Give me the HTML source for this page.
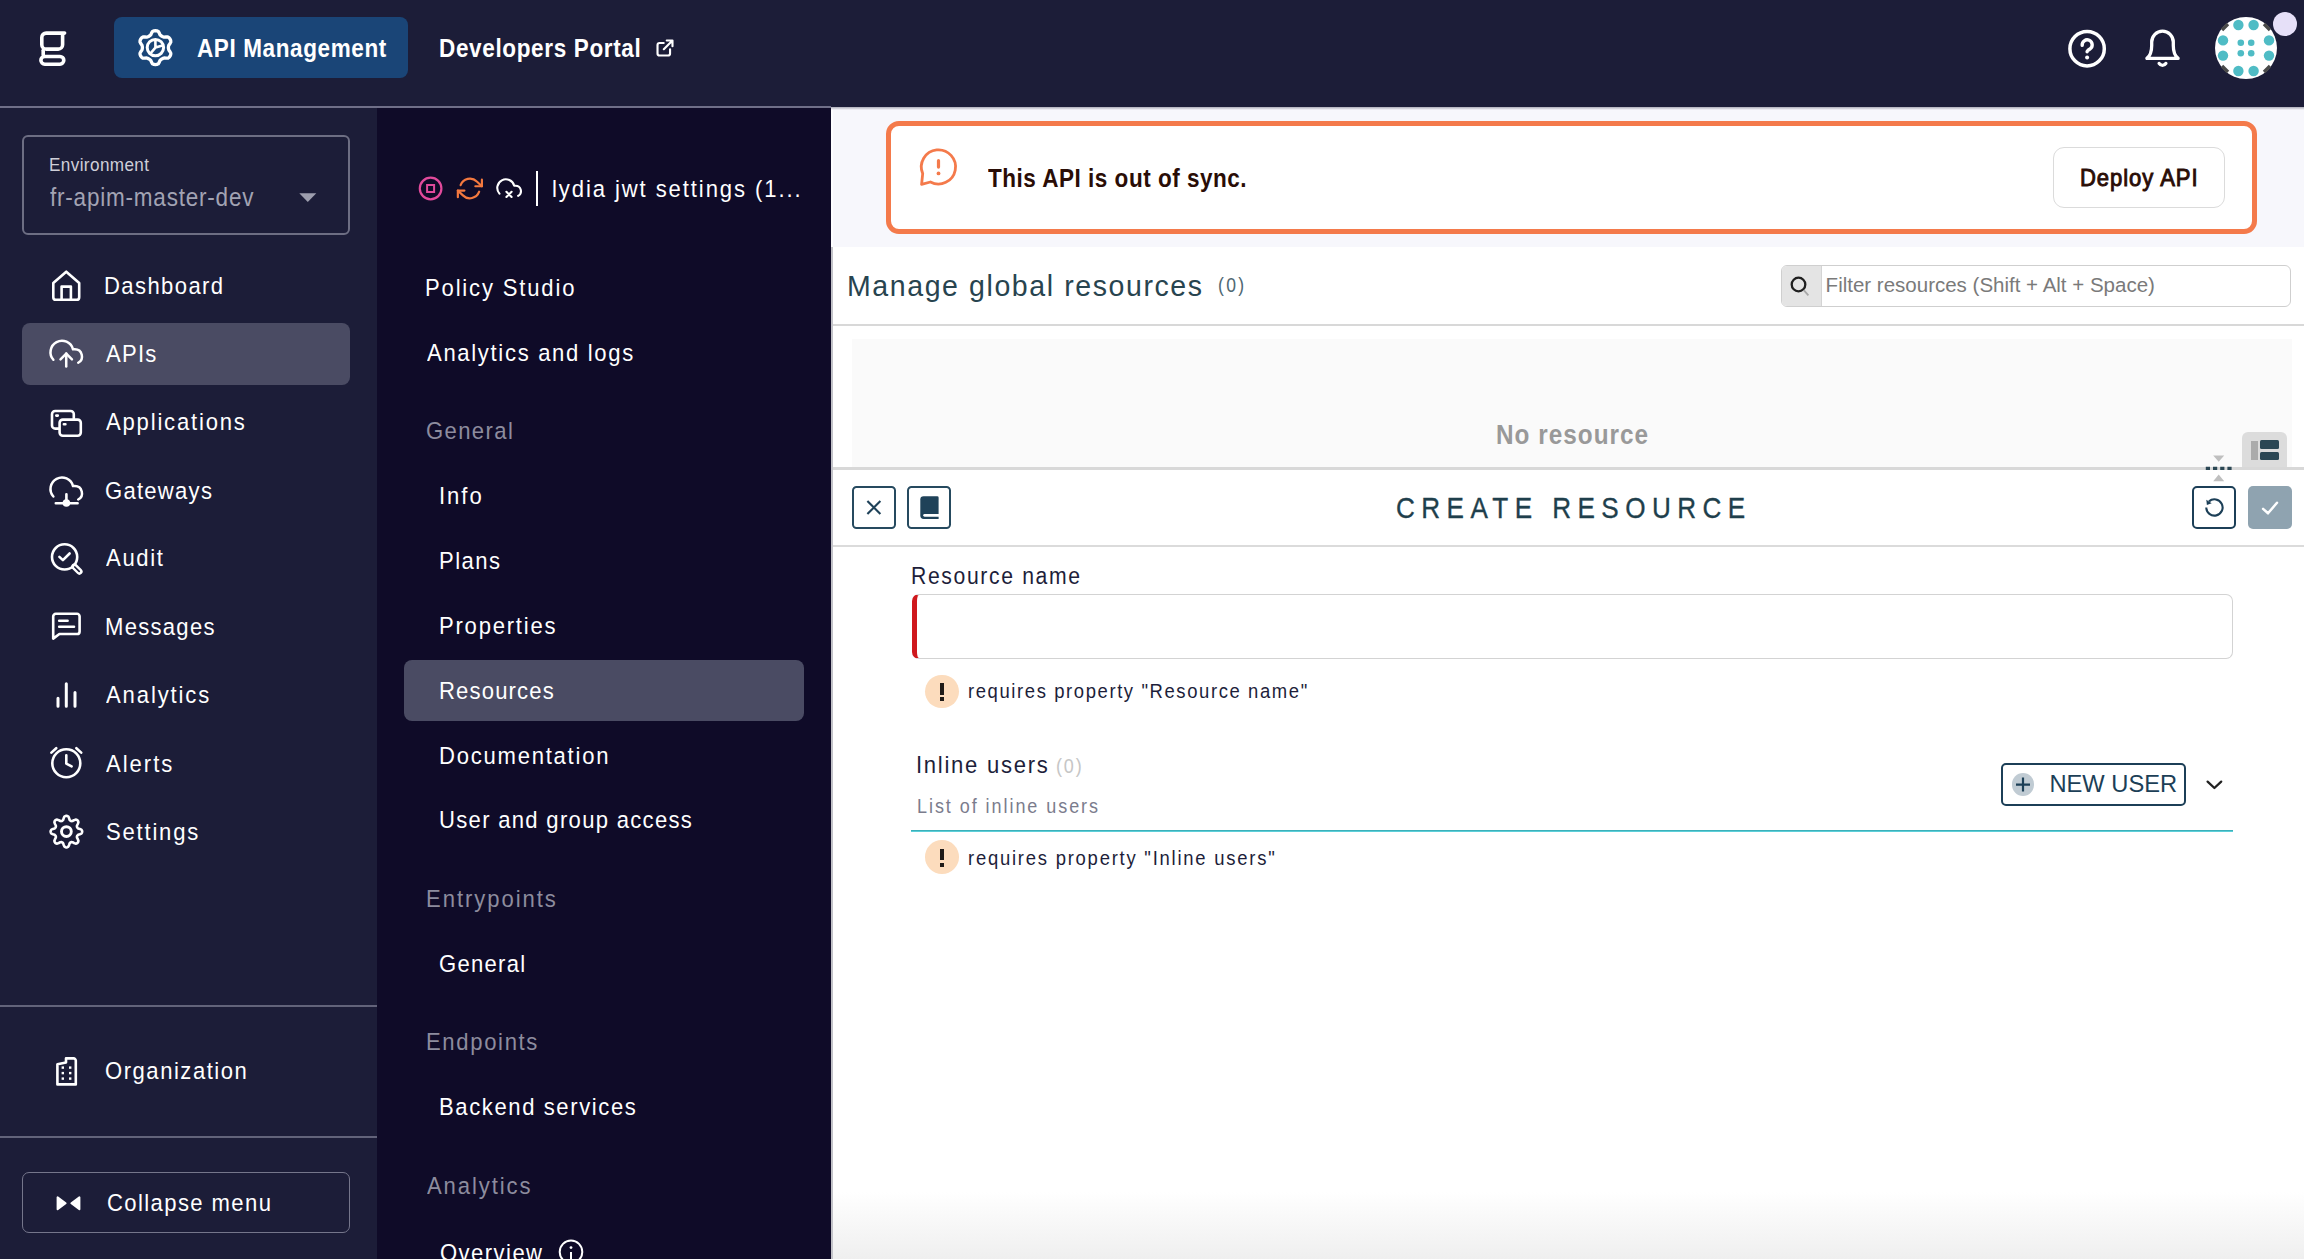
<!DOCTYPE html>
<html>
<head>
<meta charset="utf-8">
<title>API Management</title>
<style>
*{box-sizing:border-box;margin:0;padding:0}
html,body{width:2304px;height:1259px;overflow:hidden;background:#fff}
body{font-family:"Liberation Sans",sans-serif;position:relative;color:#fff}
.a{position:absolute}
.t{position:absolute;white-space:nowrap;line-height:1}
svg{position:absolute;left:0;top:0;overflow:visible}
.w{fill:none;stroke:#fff;stroke-width:2.6;stroke-linecap:round;stroke-linejoin:round}
</style>
</head>
<body>
<div class="a" style="left:0;top:0;width:2304px;height:107px;background:#1c1d38"></div>
<div class="a" style="left:0;top:107px;width:377px;height:1152px;background:#1c1d38"></div>
<div class="a" style="left:377px;top:107px;width:454px;height:1152px;background:#0f0b28"></div>
<div class="a" style="left:0;top:106px;width:831px;height:1.5px;background:#6f6f88"></div>
<div class="a" style="left:831px;top:107px;width:1473px;height:140px;background:#f7f7fc"></div>
<div class="a" style="left:831px;top:247px;width:1473px;height:1012px;background:linear-gradient(to bottom,#fff 0,#fff 945px,#efefef 1012px)"></div>
<div class="a" style="left:831px;top:247px;width:2px;height:1012px;background:#c3c3c9"></div>
<div class="a" style="left:831px;top:108px;width:2px;height:139px;background:#fdfdff"></div>
<div class="a" style="left:831px;top:107px;width:1473px;height:3px;background:linear-gradient(to bottom,rgba(30,31,58,.35),rgba(30,31,58,0))"></div>
<div class="a" style="left:114px;top:17px;width:294px;height:61px;border-radius:8px;background:#1a4577"></div>
<div class="t" style="left:196.69px;top:35.65px;font-size:25px;letter-spacing:0.688px;color:#fff;transform:scaleX(0.9000);transform-origin:0 0;font-weight:bold;">API Management</div>
<div class="t" style="left:438.79px;top:35.65px;font-size:25px;letter-spacing:0.724px;color:#fff;transform:scaleX(0.9000);transform-origin:0 0;font-weight:bold;">Developers Portal</div>
<div class="a" style="left:2273.2px;top:12px;width:24px;height:24px;border-radius:50%;background:#e6e0f8"></div>
<div class="a" style="left:22px;top:135px;width:327.5px;height:99.5px;border:2px solid #6d6e83;border-radius:6px"></div>
<div class="t" style="left:48.88px;top:155.15px;font-size:19px;letter-spacing:0.447px;color:#cfcfd8;transform:scaleX(0.9000);transform-origin:0 0;">Environment</div>
<div class="t" style="left:49.91px;top:185.15px;font-size:25px;letter-spacing:0.878px;color:#a2a3b3;transform:scaleX(0.9000);transform-origin:0 0;">fr-apim-master-dev</div>
<div class="a" style="left:22px;top:323.25px;width:327.5px;height:61.25px;border-radius:8px;background:#4a4b63"></div>
<div class="t" style="left:104.24px;top:274.15px;font-size:24.5px;letter-spacing:1.564px;color:#fff;transform:scaleX(0.9000);transform-origin:0 0;">Dashboard</div>
<div class="t" style="left:105.50px;top:342.15px;font-size:24.5px;letter-spacing:1.388px;color:#fff;transform:scaleX(0.9000);transform-origin:0 0;">APIs</div>
<div class="t" style="left:106.00px;top:410.15px;font-size:24.5px;letter-spacing:2.012px;color:#fff;transform:scaleX(0.9000);transform-origin:0 0;">Applications</div>
<div class="t" style="left:104.90px;top:478.65px;font-size:24.5px;letter-spacing:1.407px;color:#fff;transform:scaleX(0.9000);transform-origin:0 0;">Gateways</div>
<div class="t" style="left:106.00px;top:546.40px;font-size:24.5px;letter-spacing:1.860px;color:#fff;transform:scaleX(0.9000);transform-origin:0 0;">Audit</div>
<div class="t" style="left:104.74px;top:614.65px;font-size:24.5px;letter-spacing:1.427px;color:#fff;transform:scaleX(0.9000);transform-origin:0 0;">Messages</div>
<div class="t" style="left:106.00px;top:683.15px;font-size:24.5px;letter-spacing:2.093px;color:#fff;transform:scaleX(0.9000);transform-origin:0 0;">Analytics</div>
<div class="t" style="left:106.00px;top:751.65px;font-size:24.5px;letter-spacing:2.208px;color:#fff;transform:scaleX(0.9000);transform-origin:0 0;">Alerts</div>
<div class="t" style="left:105.51px;top:819.65px;font-size:24.5px;letter-spacing:1.993px;color:#fff;transform:scaleX(0.9000);transform-origin:0 0;">Settings</div>
<div class="t" style="left:105.31px;top:1059.45px;font-size:24.5px;letter-spacing:1.697px;color:#fff;transform:scaleX(0.9000);transform-origin:0 0;">Organization</div>
<div class="t" style="left:106.50px;top:1190.55px;font-size:24.5px;letter-spacing:1.561px;color:#fff;transform:scaleX(0.9000);transform-origin:0 0;">Collapse menu</div>
<div class="a" style="left:0;top:1005px;width:377px;height:1.5px;background:#62637a"></div>
<div class="a" style="left:0;top:1136px;width:377px;height:1.5px;background:#62637a"></div>
<div class="a" style="left:22.2px;top:1172.4px;width:327.5px;height:60.6px;border:1.6px solid #75768b;border-radius:7px"></div>
<div class="a" style="left:535.8px;top:171px;width:2.3px;height:34.5px;background:#fff"></div>
<div class="t" style="left:551.67px;top:176.55px;font-size:24.5px;letter-spacing:2.125px;color:#fff;transform:scaleX(0.9000);transform-origin:0 0;">lydia jwt settings (1...</div>
<div class="a" style="left:404.25px;top:660px;width:399.7px;height:61.3px;border-radius:8px;background:#4a4b63"></div>
<div class="t" style="left:425.24px;top:276.45px;font-size:24.5px;letter-spacing:2.037px;color:#fff;transform:scaleX(0.9000);transform-origin:0 0;">Policy Studio</div>
<div class="t" style="left:426.60px;top:341.35px;font-size:24.5px;letter-spacing:1.866px;color:#fff;transform:scaleX(0.9000);transform-origin:0 0;">Analytics and logs</div>
<div class="t" style="left:425.50px;top:419.25px;font-size:24.5px;letter-spacing:1.546px;color:#8d8c9e;transform:scaleX(0.9000);transform-origin:0 0;">General</div>
<div class="t" style="left:439.02px;top:484.15px;font-size:24.5px;letter-spacing:2.186px;color:#fff;transform:scaleX(0.9000);transform-origin:0 0;">Info</div>
<div class="t" style="left:439.24px;top:549.15px;font-size:24.5px;letter-spacing:1.642px;color:#fff;transform:scaleX(0.9000);transform-origin:0 0;">Plans</div>
<div class="t" style="left:439.24px;top:613.90px;font-size:24.5px;letter-spacing:1.974px;color:#fff;transform:scaleX(0.9000);transform-origin:0 0;">Properties</div>
<div class="t" style="left:439.24px;top:678.90px;font-size:24.5px;letter-spacing:1.304px;color:#fff;transform:scaleX(0.9000);transform-origin:0 0;">Resources</div>
<div class="t" style="left:439.14px;top:743.55px;font-size:24.5px;letter-spacing:1.955px;color:#fff;transform:scaleX(0.9000);transform-origin:0 0;">Documentation</div>
<div class="t" style="left:439.25px;top:808.45px;font-size:24.5px;letter-spacing:1.452px;color:#fff;transform:scaleX(0.9000);transform-origin:0 0;">User and group access</div>
<div class="t" style="left:425.64px;top:887.25px;font-size:24.5px;letter-spacing:2.175px;color:#8d8c9e;transform:scaleX(0.9000);transform-origin:0 0;">Entrypoints</div>
<div class="t" style="left:439.15px;top:951.65px;font-size:24.5px;letter-spacing:1.416px;color:#fff;transform:scaleX(0.9000);transform-origin:0 0;">General</div>
<div class="t" style="left:425.64px;top:1030.15px;font-size:24.5px;letter-spacing:1.849px;color:#8d8c9e;transform:scaleX(0.9000);transform-origin:0 0;">Endpoints</div>
<div class="t" style="left:439.14px;top:1095.45px;font-size:24.5px;letter-spacing:1.776px;color:#fff;transform:scaleX(0.9000);transform-origin:0 0;">Backend services</div>
<div class="t" style="left:427.00px;top:1173.75px;font-size:24.5px;letter-spacing:2.121px;color:#8d8c9e;transform:scaleX(0.9000);transform-origin:0 0;">Analytics</div>
<div class="t" style="left:439.51px;top:1241.25px;font-size:24.5px;letter-spacing:1.610px;color:#fff;transform:scaleX(0.9000);transform-origin:0 0;">Overview</div>
<div class="a" style="left:886.25px;top:121px;width:1371px;height:112.5px;border:5px solid #f47a4b;border-radius:13px;background:#fff"></div>
<div class="t" style="left:987.52px;top:165.65px;font-size:25px;letter-spacing:0.572px;color:#2a0d06;transform:scaleX(0.9000);transform-origin:0 0;font-weight:bold;">This API is out of sync.</div>
<div class="a" style="left:2053px;top:147.25px;width:171.75px;height:60.5px;border:1.5px solid #dbdbdb;border-radius:11px;background:#fff"></div>
<div class="t" style="left:2080.24px;top:165.85px;font-size:24.5px;letter-spacing:1.045px;color:#2a0d06;transform:scaleX(0.9000);transform-origin:0 0;-webkit-text-stroke:0.95px #2a0d06;">Deploy API</div>
<div class="t" style="left:847.47px;top:271.40px;font-size:30px;letter-spacing:1.673px;color:#28444f;transform:scaleX(0.9500);transform-origin:0 0;">Manage global resources</div>
<div class="t" style="left:1218.20px;top:275.95px;font-size:19.5px;letter-spacing:2.608px;color:#4f6873;transform:scaleX(0.9000);transform-origin:0 0;">(0)</div>
<div class="a" style="left:1780.5px;top:264.75px;width:510.75px;height:41.75px;border:1.5px solid #cfcfcf;border-radius:6px;background:#fff;overflow:hidden"><div class="a" style="left:0;top:0;width:40px;height:40px;background:#e4e4e4;border-right:1px solid #d4d4d4"></div></div>
<div class="t" style="left:1825.61px;top:275.25px;font-size:20.51px;letter-spacing:0.000px;color:#7a7a7a;">Filter resources (Shift + Alt + Space)</div>
<div class="a" style="left:833px;top:324px;width:1471px;height:2px;background:#d8d8d8"></div>
<div class="a" style="left:852px;top:339px;width:1440px;height:128px;background:#fafafa"></div>
<div class="t" style="left:1495.67px;top:421.65px;font-size:27px;letter-spacing:1.141px;color:#999;transform:scaleX(0.9000);transform-origin:0 0;font-weight:bold;">No resource</div>
<div class="a" style="left:2242px;top:432px;width:45px;height:36px;border-radius:6px 6px 0 0;background:#dcdcdc"></div>
<div class="a" style="left:2250.75px;top:440.5px;width:6.75px;height:19.75px;background:#ababab"></div>
<div class="a" style="left:2260.4px;top:440.25px;width:18.7px;height:8.5px;border-radius:1.5px;background:#2b4754"></div>
<div class="a" style="left:2260.4px;top:451.9px;width:18.7px;height:8.5px;border-radius:1.5px;background:#2b4754"></div>
<div class="a" style="left:833px;top:467px;width:1471px;height:3px;background:#d8d8d8"></div>
<div class="t" style="left:1395.94px;top:492.90px;font-size:30px;letter-spacing:7.394px;color:#1f3f4c;transform:scaleX(0.8700);transform-origin:0 0;-webkit-text-stroke:0.35px #1f3f4c;">CREATE RESOURCE</div>
<div class="a" style="left:852px;top:486.25px;width:43.75px;height:42.5px;border:2px solid #264a5f;border-radius:4.5px;background:#fff"></div>
<div class="a" style="left:907px;top:486.25px;width:44.25px;height:42.5px;border:2px solid #264a5f;border-radius:4.5px;background:#fff"></div>
<div class="a" style="left:2192.25px;top:486.25px;width:44px;height:42.5px;border:2px solid #1c3f57;border-radius:5px;background:#fff"></div>
<div class="a" style="left:2248px;top:486.25px;width:44px;height:42.5px;border-radius:5px;background:#8fa3b0"></div>
<div class="a" style="left:833px;top:545px;width:1471px;height:2px;background:#dbdbdb"></div>
<div class="t" style="left:911.31px;top:564.90px;font-size:23.5px;letter-spacing:1.826px;color:#1d1e3a;transform:scaleX(0.9000);transform-origin:0 0;">Resource name</div>
<div class="a" style="left:912px;top:593.75px;width:1320.5px;height:65.5px;border:1.5px solid #d3d3d3;border-left:5.6px solid #cf181d;border-radius:7px;background:#fff"></div>
<div class="a" style="left:925px;top:674.8px;width:33.7px;height:33.7px;border-radius:50%;background:#fcdcbd"></div>
<div class="a" style="left:940.1px;top:683.2px;width:3.9px;height:11.6px;background:#1f1a17"></div>
<div class="a" style="left:940.1px;top:697.2px;width:3.9px;height:4px;background:#1f1a17"></div>
<div class="a" style="left:925px;top:840.3px;width:33.7px;height:33.7px;border-radius:50%;background:#fcdcbd"></div>
<div class="a" style="left:940.1px;top:848.7px;width:3.9px;height:11.6px;background:#1f1a17"></div>
<div class="a" style="left:940.1px;top:862.7px;width:3.9px;height:4px;background:#1f1a17"></div>
<div class="t" style="left:968.05px;top:681.40px;font-size:20.5px;letter-spacing:1.780px;color:#1d1e3a;transform:scaleX(0.9000);transform-origin:0 0;">requires property &quot;Resource name&quot;</div>
<div class="t" style="left:916.02px;top:753.40px;font-size:24.5px;letter-spacing:1.916px;color:#1d1e3a;transform:scaleX(0.9000);transform-origin:0 0;">Inline users</div>
<div class="t" style="left:1055.67px;top:755.70px;font-size:20px;letter-spacing:2.056px;color:#c6c6c6;transform:scaleX(0.9000);transform-origin:0 0;">(0)</div>
<div class="t" style="left:916.56px;top:795.90px;font-size:20px;letter-spacing:2.163px;color:#7b7c8d;transform:scaleX(0.9000);transform-origin:0 0;">List of inline users</div>
<div class="a" style="left:2001px;top:763.1px;width:185.2px;height:42.6px;border:2px solid #1c3f57;border-radius:5px;background:#fff"></div>
<div class="a" style="left:2011.8px;top:773.4px;width:22.4px;height:22.4px;border-radius:50%;background:#c0cbd3"></div>
<div class="t" style="left:2049.40px;top:772.79px;font-size:23.71px;letter-spacing:0.000px;color:#1c3f57;">NEW USER</div>
<div class="a" style="left:910.5px;top:830px;width:1322.4px;height:2px;background:linear-gradient(to bottom,#3bb0b9 50%,#5ccfd9 50%)"></div>
<div class="t" style="left:968.05px;top:847.65px;font-size:20.5px;letter-spacing:1.959px;color:#1d1e3a;transform:scaleX(0.9000);transform-origin:0 0;">requires property &quot;Inline users&quot;</div>
<svg width="2304" height="1259" viewBox="0 0 2304 1259">
<g fill="none" stroke="#fff" stroke-width="3.6" stroke-linecap="round" stroke-linejoin="round"><path d="M64.6 33.1H46.2a4.4 4.4 0 0 0-4.4 4.4v7.2a4.4 4.4 0 0 0 4.4 4.4h12a4.4 4.4 0 0 0 4.4-4.4V33.1"/><rect x="40.9" y="56.5" width="22.9" height="7.7" rx="3.85"/><path d="M43.2 50.2v4.8"/></g>
<g transform="translate(155.4 47.6)" fill="none" stroke="#fff" stroke-linejoin="round"><path d="M13.0 -0.0L13.1 -1.1L13.4 -2.4L14.5 -3.9L15.4 -5.6L15.3 -7.1L14.7 -8.5L13.8 -9.7L12.6 -10.6L10.6 -10.6L8.7 -10.4L7.5 -10.8L6.5 -11.3L5.6 -11.9L4.6 -12.8L3.9 -14.5L2.9 -16.2L1.5 -16.8L0.0 -17.0L-1.5 -16.8L-2.9 -16.2L-3.9 -14.5L-4.6 -12.8L-5.6 -11.9L-6.5 -11.3L-7.5 -10.8L-8.7 -10.4L-10.6 -10.6L-12.6 -10.6L-13.8 -9.7L-14.7 -8.5L-15.3 -7.1L-15.4 -5.6L-14.5 -3.9L-13.4 -2.4L-13.1 -1.1L-13.0 -0.0L-13.1 1.1L-13.4 2.4L-14.5 3.9L-15.4 5.6L-15.3 7.1L-14.7 8.5L-13.8 9.7L-12.6 10.6L-10.6 10.6L-8.7 10.4L-7.5 10.8L-6.5 11.3L-5.6 11.9L-4.6 12.8L-3.9 14.5L-2.9 16.2L-1.5 16.8L-0.0 17.0L1.5 16.8L2.9 16.2L3.9 14.5L4.6 12.8L5.6 11.9L6.5 11.3L7.5 10.8L8.7 10.4L10.6 10.6L12.6 10.6L13.8 9.7L14.7 8.5L15.3 7.1L15.4 5.6L14.5 3.9L13.4 2.4L13.1 1.1Z" stroke-width="3.3"/><circle r="8.2" stroke-width="3"/><path d="M0 -8V0L8 -2.4M0 0L-5.4 6.4" stroke-width="2.6"/></g>
<path transform="translate(656.3 39.3) scale(0.87)" d="M8.5 4.2H3.8a2.4 2.4 0 0 0-2.4 2.4v9.6a2.4 2.4 0 0 0 2.4 2.4h9.6a2.4 2.4 0 0 0 2.4-2.4v-4.7M12 1.4h6.6V8M18.3 1.7L8.6 11.4" fill="none" stroke="#fff" stroke-width="2.45" stroke-linecap="round" stroke-linejoin="round"/>
<g transform="translate(2087.1 48.7)" fill="none" stroke="#fff" stroke-linecap="round"><circle r="17.2" stroke-width="3.5"/><path d="M-4.9 -3.4A5 5 0 1 1 3 .2C1.2 1.3 0 2 0 3.1" stroke-width="3.4"/><circle cy="8.8" r="2" fill="#fff" stroke="none"/></g>
<g transform="translate(2162.5 48)" fill="none" stroke="#fff" stroke-width="3.3" stroke-linejoin="round" stroke-linecap="round"><path d="M-15.6 10.4H15.6C12 7.5 10.8 4 10.8 -2.6V-6a10.8 10.8 0 0 0-21.6 0v3.4C-10.8 4-12 7.5-15.6 10.4Z"/><path d="M-3.4 15.4a4 4 0 0 0 6.8 0"/></g>
<g transform="translate(2246 48)"><circle r="31" fill="#fff"/><g fill="#4fbcc5"><circle cx="-7.6" cy="-23" r="5.2"/><circle cx="7.6" cy="-23" r="5.2"/><circle cx="-7.6" cy="23" r="5.2"/><circle cx="7.6" cy="23" r="5.2"/><circle cx="-23" cy="-7.6" r="5.2"/><circle cx="-23" cy="7.6" r="5.2"/><circle cx="23" cy="-7.6" r="5.2"/><circle cx="23" cy="7.6" r="5.2"/><circle cx="-5.2" cy="-5.2" r="3.3"/><circle cx="5.2" cy="-5.2" r="3.3"/><circle cx="-5.2" cy="5.2" r="3.3"/><circle cx="5.2" cy="5.2" r="3.3"/></g><path d="M-24 -18L-18 -24M24 -18L18 -24M-24 18L-18 24M24 18L18 24" stroke="#4a4a4a" stroke-width="3.4"/></g>
<path d="M299.3 193.3H316.3L307.8 202Z" fill="#9d9eae"/>
<g class="w">
<path d="M53.3 283L66.25 271.7L79.2 283V297.2a2.6 2.6 0 0 1-2.6 2.6H55.9a2.6 2.6 0 0 1-2.6-2.6Z"/><path d="M61.6 299.4V286.6H70.9V299.4"/>
<g transform="translate(49.07 336.46) scale(1.43)" stroke-width="1.75"><polyline points="16 16 12 12 8 16"/><line x1="12" y1="12" x2="12" y2="21"/><path d="M20.39 18.39A5 5 0 0 0 18 9h-1.26A8 8 0 1 0 3 16.3"/></g>
<path d="M58.6 428.6H55.2a3.2 3.2 0 0 1-3.2-3.2V414.2a3.2 3.2 0 0 1 3.2-3.2H70.6a3.2 3.2 0 0 1 3.2 3.2V418.6"/><rect x="59.6" y="419.6" width="21.2" height="16.2" rx="3.2"/><path d="M56.3 415.6h1.5M63.9 424.2h1.5"/>
<g transform="translate(49.07 473.2) scale(1.43)" stroke-width="1.75"><path d="M20.39 18.39A5 5 0 0 0 18 9h-1.26A8 8 0 1 0 3 16.3"/></g><path d="M55.8 503.2H77.6M66.4 494.2V500"/><circle cx="66.4" cy="503" r="3.8" fill="#fff" stroke="none"/>
<circle cx="64.6" cy="556.9" r="12.6"/><path d="M59.4 556.9L62.9 560.1L69.6 553.5"/><path d="M74.4 566.6L79.4 571.6" stroke-width="6.4"/><path d="M74.8 567L79.2 571.4" stroke="#1c1d38" stroke-width="1.7"/>
<path d="M53.2 638.6V616.4a2.6 2.6 0 0 1 2.6-2.6H77a2.6 2.6 0 0 1 2.6 2.6V631.4a2.6 2.6 0 0 1-2.6 2.6H59.4Z"/><path d="M59.2 620.7H67.6M59.2 626.7H74"/>
<path d="M58 698.3V706.3M66.3 683.7V706.3M75 692.5V706.3" stroke-width="3"/>
<circle cx="66.3" cy="763.2" r="14"/><path d="M66.3 755.2V763.6L71.6 766.4M51.4 752.6L56.2 748.2M76.4 748.2L81.2 752.6"/>
<g transform="translate(66.4 831.6)"><path d="M15.8 -0.0L15.6 -1.0L15.0 -2.0L13.4 -2.7L11.8 -3.2L11.1 -3.8L10.7 -4.4L10.5 -5.2L10.6 -6.1L11.4 -7.6L12.0 -9.2L11.8 -10.3L11.2 -11.2L10.3 -11.8L9.2 -12.0L7.6 -11.4L6.1 -10.6L5.2 -10.5L4.4 -10.7L3.8 -11.1L3.2 -11.8L2.7 -13.4L2.0 -15.0L1.0 -15.6L0.0 -15.8L-1.0 -15.6L-2.0 -15.0L-2.7 -13.4L-3.2 -11.8L-3.8 -11.1L-4.4 -10.7L-5.2 -10.5L-6.1 -10.6L-7.6 -11.4L-9.2 -12.0L-10.3 -11.8L-11.2 -11.2L-11.8 -10.3L-12.0 -9.2L-11.4 -7.6L-10.6 -6.1L-10.5 -5.2L-10.7 -4.4L-11.1 -3.8L-11.8 -3.2L-13.4 -2.7L-15.0 -2.0L-15.6 -1.0L-15.8 -0.0L-15.6 1.0L-15.0 2.0L-13.4 2.7L-11.8 3.2L-11.1 3.8L-10.7 4.4L-10.5 5.2L-10.6 6.1L-11.4 7.6L-12.0 9.2L-11.8 10.3L-11.2 11.2L-10.3 11.8L-9.2 12.0L-7.6 11.4L-6.1 10.6L-5.2 10.5L-4.4 10.7L-3.8 11.1L-3.2 11.8L-2.7 13.4L-2.0 15.0L-1.0 15.6L-0.0 15.8L1.0 15.6L2.0 15.0L2.7 13.4L3.2 11.8L3.8 11.1L4.4 10.7L5.2 10.5L6.1 10.6L7.6 11.4L9.2 12.0L10.3 11.8L11.2 11.2L11.8 10.3L12.0 9.2L11.4 7.6L10.6 6.1L10.5 5.2L10.7 4.4L11.1 3.8L11.8 3.2L13.4 2.7L15.0 2.0L15.6 1.0Z"/><circle r="4.9" stroke-width="2.9"/></g>
<path d="M57.4 1064.2L66 1062.4V1058.4H73.6a2.2 2.2 0 0 1 2.2 2.2V1084.4H57.4Z"/></g>
<g fill="#fff"><rect x="61.599999999999994" y="1066.3999999999999" width="2.4" height="2.4"/><rect x="61.599999999999994" y="1071.8999999999999" width="2.4" height="2.4"/><rect x="61.599999999999994" y="1077.3999999999999" width="2.4" height="2.4"/><rect x="69.0" y="1066.3999999999999" width="2.4" height="2.4"/><rect x="69.0" y="1071.8999999999999" width="2.4" height="2.4"/><rect x="69.0" y="1077.3999999999999" width="2.4" height="2.4"/></g>
<path d="M57.6 1197.4V1209.2L65.6 1203.3Z M79.4 1197.4V1209.2L71.4 1203.3Z" fill="#fff" stroke="#fff" stroke-width="2" stroke-linejoin="round"/>
<g fill="none" stroke="#e24a9c" stroke-width="2.2"><circle cx="430.6" cy="188.5" r="10.8"/><rect x="427.1" y="185" width="7" height="7" stroke-width="2"/></g>
<g transform="translate(456.76 175.3) scale(1.093)" fill="none" stroke="#f4793f" stroke-width="2.0" stroke-linecap="round" stroke-linejoin="round"><polyline points="23 4 23 10 17 10"/><polyline points="1 20 1 14 7 14"/><path d="M3.51 9a9 9 0 0 1 14.85-3.36L23 10M1 14l4.64 4.36A9 9 0 0 0 20.49 15"/></g>
<g fill="none" stroke="#fff" stroke-width="2.1" stroke-linecap="round" stroke-linejoin="round"><g transform="translate(496.2 176.1) scale(1.075)" stroke-width="1.95"><path d="M20.39 18.39A5 5 0 0 0 18 9h-1.26A8 8 0 1 0 3 16.3"/></g><path d="M506.4 191.8L511.6 197M511.6 191.8L506.4 197"/></g>
<g fill="none" stroke="#fff" stroke-width="2"><circle cx="571" cy="1251.9" r="11.3"/><path d="M571 1252V1259"/></g><circle cx="571" cy="1247.6" r="1.4" fill="#fff"/>
<g fill="none" stroke="#f47a4b" stroke-linecap="round" stroke-linejoin="round"><path d="M922.7 173.6A17.1 17.1 0 1 1 930.4 182L921.6 184.3Z" stroke-width="2.8"/><path d="M938.5 160.7V167.1" stroke-width="3.2"/></g><circle cx="938.5" cy="173.4" r="1.9" fill="#f47a4b"/>
<circle cx="1798.5" cy="284.5" r="6.8" fill="none" stroke="#1f1f1f" stroke-width="2.3"/><path d="M1804 290.4L1808.4 295.4" stroke="#a8a8a8" stroke-width="1.8"/>
<path d="M2213.2 455.6H2224.2L2218.7 461.8Z M2213.2 481.2H2224.2L2218.7 474.6Z" fill="#bfbfbf"/><path d="M2205.8 468.3H2231.6" stroke="#2b4754" stroke-width="3.2" stroke-dasharray="4.2 3"/>
<path d="M867.4 501L880.4 514M880.4 501L867.4 514" stroke="#1f4259" stroke-width="2.1" fill="none"/>
<path d="M923.6 496.2H937.2a1.4 1.4 0 0 1 1.4 1.4V518.9H923.7a3.4 3.4 0 0 1-3.4-3.4V499.5a3.3 3.3 0 0 1 3.3-3.3Z" fill="#1f4259"/><path d="M924.6 514H939.4V516.7H924.6a1.35 1.35 0 0 1 0-2.7Z" fill="#fff"/>
<path d="M2209 501.4A8.15 8.15 0 1 1 2206.3 507.4" fill="none" stroke="#1c3f57" stroke-width="2.1"/><path d="M2206.3 499.7L2206.9 505L2211.7 503.3Z" fill="#1c3f57"/>
<path d="M2263.1 508.9L2268 513.3L2277 502.8" fill="none" stroke="#fff" stroke-width="2.5" stroke-linecap="round" stroke-linejoin="round"/>
<path d="M2016 784.6H2030M2023 777.6V791.6" stroke="#1c3f57" stroke-width="2.2"/>
<path d="M2207.6 781.6L2214.4 788L2221.2 781.6" fill="none" stroke="#222" stroke-width="2.3" stroke-linecap="round" stroke-linejoin="round"/>
</svg>
</body>
</html>
